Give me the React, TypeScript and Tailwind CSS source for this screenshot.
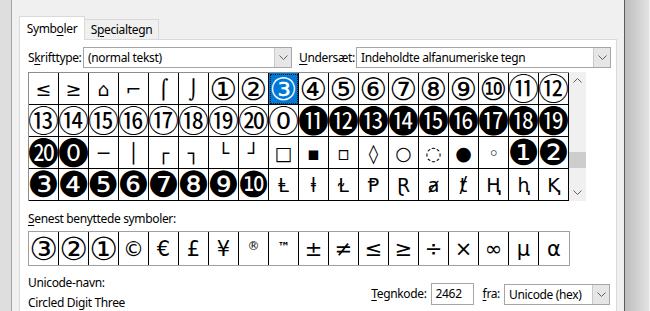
import React from 'react'

const ui = { fontFamily: '"Noto Sans", "Open Sans", sans-serif' }
const sym = { fontFamily: '"DejaVu Sans", "Noto Sans CJK JP", sans-serif' }

const rows: string[][] = [
  ['≤', '≥', '⌂', '⌐', '⌠', '⌡', '①', '②', '③', '④', '⑤', '⑥', '⑦', '⑧', '⑨', '⑩', '⑪', '⑫'],
  ['⑬', '⑭', '⑮', '⑯', '⑰', '⑱', '⑲', '⑳', '⓪', '⓫', '⓬', '⓭', '⓮', '⓯', '⓰', '⓱', '⓲', '⓳'],
  ['⓴', '⓿', '─', '│', '┌', '┐', '└', '┘', '□', '▪', '▫', '◊', '○', '◌', '●', '◦', '❶', '❷'],
  ['❸', '❹', '❺', '❻', '❼', '❽', '❾', '❿', 'Ⱡ', 'ⱡ', 'Ɫ', 'Ᵽ', 'Ɽ', 'ⱥ', 'ⱦ', 'Ⱨ', 'ⱨ', 'Ⱪ'],
]

const recent = ['③', '②', '①', '©', '€', '£', '¥', '®', '™', '±', '≠', '≤', '≥', '÷', '×', '∞', 'µ', 'α']

const isCircled = (c: string) => {
  const n = c.codePointAt(0) || 0
  return n >= 0x2460 && n <= 0x24ff
}
const isDingbat = (c: string) => {
  const n = c.codePointAt(0) || 0
  return n >= 0x2776 && n <= 0x2793
}

function Chevron({ up = false }: { up?: boolean }) {
  return (
    <svg width="9" height="5" viewBox="0 0 9 5">
      <polyline
        points={up ? '0.5,4.5 4.5,0.5 8.5,4.5' : '0.5,0.5 4.5,4.5 8.5,0.5'}
        fill="none"
        stroke="#606060"
        strokeWidth="1"
      />
    </svg>
  )
}

function Combo({ value, width }: { value: string; width: string }) {
  return (
    <div className={`flex h-[21px] items-stretch border border-[#a6a6a6] bg-white ${width}`}>
      <div className="flex-1 truncate pl-[4px] leading-[19px] text-[12px]">{value}</div>
      <div className="flex w-[17px] items-center justify-center border-l border-[#c9c9c9] bg-[#e6e6e6]">
        <Chevron />
      </div>
    </div>
  )
}

function U({ children }: { children: string }) {
  return <span className="underline underline-offset-2">{children}</span>
}

export default function App() {
  return (
    <div className="flex h-[311px] w-[650px] overflow-hidden bg-[#f0f0f0] tracking-[-0.35px] text-black" style={ui}>
      <div className="w-[12px] border-r border-[#a3a3a3] bg-[#dedede]" />

      <div className="flex w-[612px] flex-col px-[7px] pt-[16px]">
        <div className="flex h-[23px] items-end">
          <div className="relative z-10 mb-[-1px] flex h-[24px] w-[66px] items-center justify-center border border-b-0 border-[#d9d9d9] bg-white text-[12px]">
            Symb<U>o</U>ler
          </div>
          <div className="flex h-[20px] w-[74px] items-center justify-center border border-b-0 border-l-0 border-[#d9d9d9] bg-[#f0f0f0] text-[12px]">
            S<U>p</U>ecialtegn
          </div>
        </div>

        <div className="flex-1 border border-[#d9d9d9] bg-white pl-[8px] pr-[5px]">
          <div className="mt-[7px] flex h-[21px] items-center text-[12px]">
            <span className="w-[55px] whitespace-nowrap">
              S<U>k</U>rifttype:
            </span>
            <Combo value="(normal tekst)" width="w-[209px]" />
            <span className="ml-[7px] w-[57px] whitespace-nowrap">
              <U>U</U>ndersæt:
            </span>
            <Combo value="Indeholdte alfanumeriske tegn" width="w-[255px]" />
          </div>

          <div className="mt-[4px] flex">
            <div className="border-l border-t border-[#8c8c8c] tracking-normal" style={sym}>
              {rows.map((row, r) => (
                <div key={r} className="flex">
                  {row.map((c, i) => {
                    const sel = r === 0 && i === 8
                    return (
                      <div
                        key={i}
                        className={`flex h-[32px] w-[30px] items-center justify-center border-b border-r border-black leading-[26px] ${
                          sel ? 'bg-[#0078d7] text-white outline-1 outline-dotted outline-offset-[-2px] outline-[#1a1a1a]' : ''
                        } ${isCircled(c) ? 'text-[31px]' : isDingbat(c) ? 'text-[36px]' : 'text-[19px]'}`}
                      >
                        {c}
                      </div>
                    )
                  })}
                </div>
              ))}
            </div>
            <div className="flex h-[129px] w-[17px] flex-col items-center bg-[#f0f0f0]">
              <div className="flex h-[17px] items-center">
                <Chevron up />
              </div>
              <div className="mt-[63px] h-[16px] w-[17px] bg-[#cdcdcd]" />
              <div className="flex-1" />
              <div className="flex h-[17px] items-center">
                <Chevron />
              </div>
            </div>
          </div>

          <div className="mt-[10px] h-[16px] text-[12px] leading-[16px]">
            <U>S</U>enest benyttede symboler:
          </div>

          <div className="mt-[4px] flex w-fit border border-[#a0a0a0] tracking-normal" style={sym}>
            {recent.map((c, i) => (
              <div
                key={i}
                className={`flex h-[33px] w-[30px] justify-center leading-[28px] ${
                  i < recent.length - 1 ? 'border-r border-black' : ''
                } ${
                  isCircled(c)
                    ? 'items-center text-[32px]'
                    : c === '®'
                      ? 'items-start pt-[8px] text-[12px] leading-none'
                      : c === '™'
                        ? 'items-start pt-[9px] text-[12px] font-bold leading-none'
                        : 'items-center text-[21px]'
                }`}
              >
                {c}
              </div>
            ))}
          </div>

          <div className="flex text-[12px]">
            <div className="flex flex-col">
              <div className="mt-[9px] h-[16px] leading-[16px]">Unicode-navn:</div>
              <div className="mt-[4px] h-[16px] leading-[16px]">Circled Digit Three</div>
            </div>
            <div className="ml-auto mr-[1px] mt-[17px] flex h-[22px] items-center">
              <span>
                <U>T</U>egnkode:
              </span>
              <div className="ml-[4px] h-[22px] w-[43px] border border-[#a6a6a6] bg-white pl-[4px] leading-[20px]">
                2462
              </div>
              <span className="ml-[9px]">
                <U>f</U>ra:
              </span>
              <div className="ml-[4px]">
                <Combo value="Unicode (hex)" width="w-[106px]" />
              </div>
            </div>
          </div>
        </div>
      </div>

      <div className="w-[1px] bg-[#5c5c5c]" />
      <div className="w-[24px] bg-gradient-to-r from-[#bdbdbd] to-[#e3e3e3]" />
    </div>
  )
}
